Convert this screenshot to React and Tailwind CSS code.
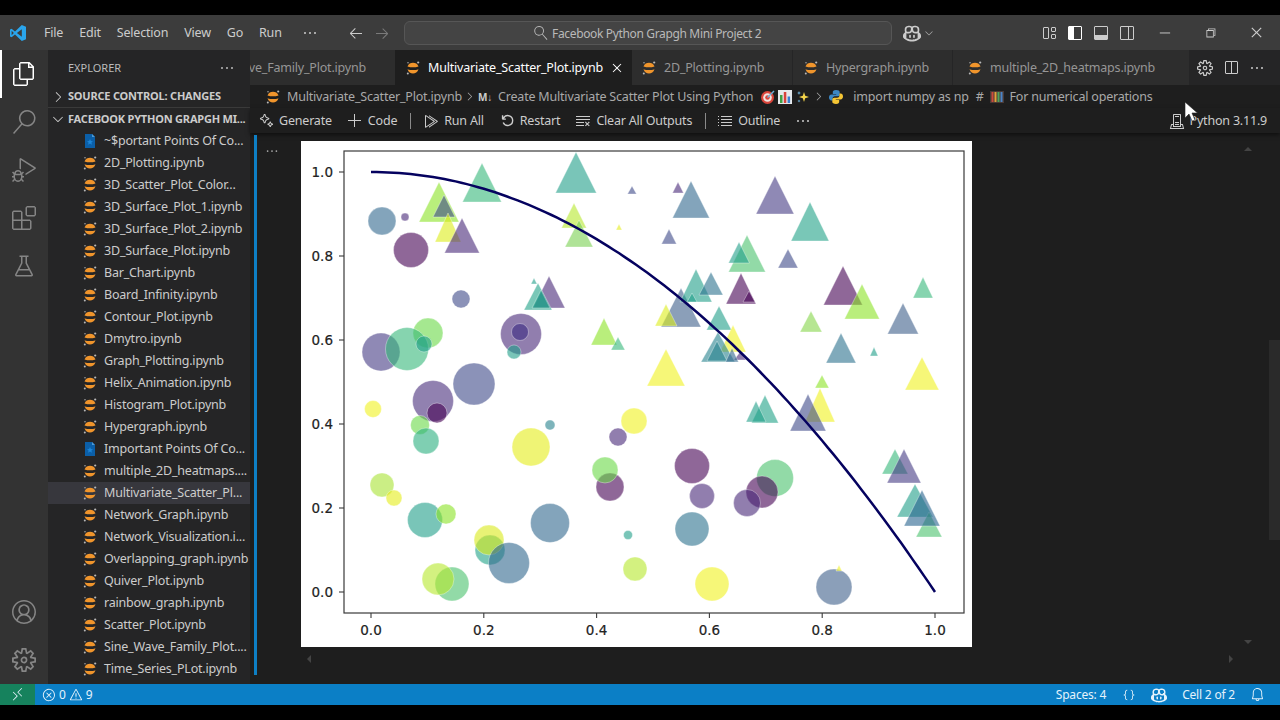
import React from 'react';
import {
  VscFiles, VscSearch, VscDebugAlt, VscExtensions, VscBeaker, VscAccount, VscSettingsGear,
  VscChevronRight, VscChevronDown, VscEllipsis, VscArrowLeft, VscArrowRight, VscClose,
  VscChromeMinimize, VscChromeRestore, VscChromeClose, VscSplitHorizontal, VscLayoutSidebarLeft,
  VscLayoutPanel, VscLayoutSidebarRightOff, VscLayout, VscCopilot, VscSparkle, VscAdd, VscRunAll,
  VscDebugRestart, VscClearAll, VscListUnordered, VscServerEnvironment, VscBell, VscRemote,
  VscError, VscWarning, VscJson,
} from 'react-icons/vsc';

const font = { fontFamily: '"Noto Sans", "Open Sans", sans-serif' };

const files = [
  ['~$portant Points Of Co...', 'word'],
  ['2D_Plotting.ipynb'],
  ['3D_Scatter_Plot_Color...'],
  ['3D_Surface_Plot_1.ipynb'],
  ['3D_Surface_Plot_2.ipynb'],
  ['3D_Surface_Plot.ipynb'],
  ['Bar_Chart.ipynb'],
  ['Board_Infinity.ipynb'],
  ['Contour_Plot.ipynb'],
  ['Dmytro.ipynb'],
  ['Graph_Plotting.ipynb'],
  ['Helix_Animation.ipynb'],
  ['Histogram_Plot.ipynb'],
  ['Hypergraph.ipynb'],
  ['Important Points Of Co...', 'word'],
  ['multiple_2D_heatmaps....'],
  ['Multivariate_Scatter_Pl...', 'nb', true],
  ['Network_Graph.ipynb'],
  ['Network_Visualization.i...'],
  ['Overlapping_graph.ipynb'],
  ['Quiver_Plot.ipynb'],
  ['rainbow_graph.ipynb'],
  ['Scatter_Plot.ipynb'],
  ['Sine_Wave_Family_Plot....'],
  ['Time_Series_PLot.ipynb'],
];

// [cx, cy, r, colour]
const circles = [
  [382, 221, 14, '#31688e'], [405, 217, 4, '#482878'], [411, 250, 17.5, '#440154'],
  [461, 299, 9, '#3e4989'], [521, 334, 20.5, '#482878'], [520, 332, 8.5, '#3b2a80'],
  [514, 352, 7, '#1f9e89'], [428, 333, 15, '#69d846'], [381, 352, 19, '#443a83'],
  [407, 349, 21.5, '#35b779'], [424, 344, 8, '#1f9e89'], [474, 384, 21, '#3e4989'],
  [433, 401, 20.5, '#472d7b'], [437, 413, 10, '#440154'], [373, 409, 8.5, '#f0f11e'],
  [420, 425, 9.5, '#69d846'], [426, 441, 13, '#29af7f'], [550, 425, 5, '#26828e'],
  [531, 447, 19, '#e5ec19'], [634, 421, 13, '#f0f11e'], [618, 437, 9, '#482878'],
  [610, 487, 14, '#440154'], [605, 470, 13, '#69d846'], [382, 485, 12, '#a8e234'],
  [394, 498, 8, '#e5ec19'], [425, 520, 17.5, '#1f9e89'], [446, 514, 10, '#8ae224'],
  [490, 550, 15, '#1fa187'], [489, 540, 15, '#d8ea19'], [509, 563, 20.5, '#31688e'],
  [550, 523, 19.5, '#31688e'], [452, 584, 17, '#4ac16d'], [438, 579, 16, '#b5e82b'],
  [628, 535, 4.5, '#1f9e89'], [635, 569, 12, '#b5e82b'], [692, 466, 17.5, '#440154'],
  [702, 496, 12.5, '#482878'], [692, 529, 17, '#2c728e'], [712, 584, 17, '#f0f11e'],
  [775, 478, 18.5, '#4ac16d'], [762, 492, 16, '#440154'], [747, 503, 13.5, '#482878'],
  [834, 587, 18, '#3e5f8a'],
];

// [cx, top, base, half width, colour]
const triangles = [
  [482, 163, 202, 19.5, '#35b779'], [576, 152, 193, 20.5, '#1f9e89'], [632, 186, 194, 4.5, '#3e4989'],
  [439, 182, 222, 20, '#8ae224'], [444, 195, 217, 11, '#3e4989'], [448, 213, 242, 13, '#dcec19'],
  [462, 218, 253, 17.5, '#482878'], [574, 203, 228, 12.5, '#b5e82b'], [579, 220, 247, 14, '#7ad151'],
  [619, 224, 230, 3, '#e5ec19'], [534, 278, 284, 3, '#1f9e89'], [549, 276, 308, 16, '#482878'],
  [538, 283, 310, 14, '#1fa187'], [541, 290, 308, 9, '#1f9e89'], [604, 318, 345, 13, '#8ae224'],
  [618, 337, 350, 7, '#35b779'], [666, 349, 386, 19, '#f0f11e'], [678, 182, 193, 5.5, '#482878'],
  [691, 181, 218, 18.5, '#31688e'], [775, 176, 214, 19, '#443a83'], [810, 202, 241, 19, '#1fa187'],
  [669, 229, 244, 7.5, '#3e4989'], [747, 235, 272, 18.5, '#4ac16d'], [739, 242, 263, 10.5, '#1f9e89'],
  [788, 249, 268, 10, '#3e4989'], [843, 266, 305, 19.5, '#440154'], [862, 284, 319, 17.5, '#8ae224'],
  [923, 277, 298, 10, '#35b779'], [903, 303, 334, 15.5, '#3e5f8a'], [811, 311, 332, 11, '#86d549'],
  [841, 333, 363, 15, '#2c728e'], [874, 347, 356, 4, '#1f9e89'], [922, 357, 390, 17, '#f0f11e'],
  [681, 288, 327, 20, '#3e5f8a'], [696, 269, 302, 16, '#1f9e89'], [711, 272, 295, 12, '#2c728e'],
  [741, 273, 304, 15, '#440154'], [749, 291, 302, 6, '#440154'], [666, 304, 326, 11, '#dcec19'],
  [692, 293, 302, 5, '#1f9e89'], [719, 306, 330, 12.5, '#1f9e89'], [733, 325, 352, 13, '#f0f11e'],
  [718, 332, 362, 17, '#26828e'], [717, 341, 361, 10, '#26828e'], [740, 352, 360, 6, '#482878'],
  [732, 348, 362, 6.5, '#31688e'], [822, 375, 388, 7, '#8ae224'], [765, 395, 423, 13.5, '#1fa187'],
  [756, 401, 422, 10, '#1f9e89'], [820, 388, 422, 15, '#f0f11e'], [808, 394, 431, 18, '#3e4989'],
  [895, 449, 474, 13, '#35b779'], [904, 449, 483, 17, '#443a83'], [915, 484, 517, 18, '#1f9e89'],
  [929, 512, 537, 13, '#4ac16d'], [922, 490, 526, 18, '#26628e'], [839, 565, 571, 3, '#f0f11e'],
];

const curve = Array.from({ length: 101 }, (_, i) => {
  const t = i / 100;
  return `${(371 + 564 * t).toFixed(1)},${(592 - 420 * (1 - t * t)).toFixed(1)}`;
}).join(' ');

function NotebookIcon({ size = 16 }) {
  return (
    <svg width={size} height={size} viewBox="0 0 16 16" className="shrink-0">
      <path d="M2.500 6.400C3.500 3.600 5.600 2.700 8 2.700s4.500.9 5.500 3.700C11.500 7 10 7.300 8 7.300S4.500 7 2.500 6.400z" fill="#f0952c" />
      <path d="M2.500 9.200C4.500 9.900 6 10.100 8 10.100s3.500-.2 5.500-.9C12.500 12.400 10.400 13.500 8 13.500S3.500 12.400 2.500 9.200z" fill="#f0952c" />
      <circle cx="13.200" cy="2.500" r="1.100" fill="#b8b8b8" />
      <circle cx="3" cy="2.800" r=".7" fill="#b8b8b8" />
      <circle cx="2.800" cy="13.600" r="1" fill="#b8b8b8" />
    </svg>
  );
}

function WordIcon() {
  return (
    <svg width="16" height="16" viewBox="0 0 16 16" className="shrink-0">
      <path d="M3 1h7l3 3v11H3z" fill="#0b5fa8" />
      <path d="M10 1l3 3h-3z" fill="#4d9ad6" />
      <path d="M8 6l.9 2 2.100.2-1.600 1.400.5 2.100L8 10.600 6.100 11.700l.5-2.100L5 8.200 7.100 8z" fill="#1c86d8" />
    </svg>
  );
}

function VsCodeLogo() {
  return (
    <svg width="18" height="18" viewBox="0 0 18 18">
      <path d="M12.800 1L6 7.400 2.600 4.800 1 5.600v6.800l1.600.8L6 10.600l6.800 6.400 4.200-1.700V2.700z" fill="#2aa5ec" />
      <path d="M12.800 5.300L7.900 9l4.900 3.700z" fill="#3c3c3c" />
      <path d="M2.600 6.700v4.600L4.900 9z" fill="#3c3c3c" />
    </svg>
  );
}

function PythonIcon() {
  return (
    <svg width="16" height="16" viewBox="0 0 16 16" className="shrink-0">
      <path d="M8 1C5.500 1 4.800 2 4.800 3.200V5h3.400v.6H3.400C2 5.600 1 6.800 1 8.500s1 2.900 2.300 2.900h1.300V9.600c0-1.300 1-2.300 2.300-2.300h3c1 0 1.800-.8 1.800-1.900V3.200C11.700 1.900 10.500 1 8 1z" fill="#3b87c4" />
      <path d="M8 15c2.500 0 3.200-1 3.200-2.200V11H7.800v-.6h4.800c1.400 0 2.400-1.200 2.400-2.900s-1-2.900-2.300-2.900h-1.300v1.800c0 1.300-1 2.300-2.300 2.300h-3c-1 0-1.800.8-1.800 1.900v2.200C4.300 14.100 5.500 15 8 15z" fill="#f4c534" />
    </svg>
  );
}

function EmojiTarget() {
  return (
    <svg width="16" height="16" viewBox="0 0 16 16" className="shrink-0">
      <circle cx="7.500" cy="8.500" r="6.500" fill="#d9453b" />
      <circle cx="7.500" cy="8.500" r="4.300" fill="#f1e4e0" />
      <circle cx="7.500" cy="8.500" r="2.300" fill="#d9453b" />
      <path d="M7.500 8.500L14 2" stroke="#6fb1d8" strokeWidth="1.400" />
    </svg>
  );
}

function EmojiChart() {
  return (
    <svg width="16" height="16" viewBox="0 0 16 16" className="shrink-0">
      <rect x="1" y="1" width="14" height="14" fill="#e6e9ec" />
      <rect x="3" y="6" width="2.500" height="8" fill="#3fa045" />
      <rect x="6.800" y="3" width="2.500" height="11" fill="#d8443c" />
      <rect x="10.600" y="7.500" width="2.500" height="6.500" fill="#3a7fd0" />
    </svg>
  );
}

function EmojiSparkle() {
  return (
    <svg width="16" height="16" viewBox="0 0 16 16" className="shrink-0">
      <path d="M9 3l1.200 3.800L14 8l-3.800 1.200L9 13 7.800 9.200 4 8l3.800-1.200z" fill="#f2d34a" />
      <path d="M4 2l.6 1.400L6 4l-1.400.6L4 6l-.6-1.400L2 4l1.400-.6zM4 10.500l.5 1 1 .5-1 .5-.5 1-.5-1-1-.5 1-.5z" fill="#6fb1d8" />
    </svg>
  );
}

function EmojiAbacus() {
  return (
    <svg width="14" height="14" viewBox="0 0 14 14" className="shrink-0">
      <rect x="0" y="1" width="14" height="12" fill="#4a3a36" />
      <rect x="1.500" y="2" width="2" height="10" fill="#c94a3c" />
      <rect x="4.500" y="2" width="2" height="10" fill="#e2a23c" />
      <rect x="7.500" y="2" width="2" height="10" fill="#4fa35a" />
      <rect x="10.500" y="2" width="2" height="10" fill="#4a86c8" />
    </svg>
  );
}

function Plot() {
  const xt = [0, 0.2, 0.4, 0.6, 0.8, 1];
  return (
    <svg viewBox="301 141 671 506" width="671" height="506" className="block shrink-0" style={{ fontFamily: '"DejaVu Sans", sans-serif', letterSpacing: 0 }}>
      <rect x="301" y="141" width="671" height="506" fill="#fff" />
      {circles.map(([cx, cy, r, c], i) => (
        <circle key={i} cx={cx} cy={cy} r={r} fill={c} fillOpacity=".6" stroke="#fff" strokeOpacity=".35" strokeWidth="1" />
      ))}
      {triangles.map(([cx, top, base, hw, c], i) => (
        <polygon key={i} points={`${cx},${top} ${cx - hw},${base} ${cx + hw},${base}`} fill={c} fillOpacity=".6" stroke="#fff" strokeOpacity=".35" strokeWidth="1" />
      ))}
      <polyline points={curve} fill="none" stroke="#05025f" strokeWidth="2.500" />
      <rect x="344" y="151" width="620" height="462" fill="none" stroke="#3a3a3a" strokeWidth="1.200" />
      {xt.map((v) => (
        <g key={v}>
          <line x1={371 + 564 * v} x2={371 + 564 * v} y1="613" y2="618" stroke="#3a3a3a" strokeWidth="1.100" />
          <text x={371 + 564 * v} y="635" textAnchor="middle" fontSize="13.500" fill="#222" stroke="#222" strokeWidth=".2">{v.toFixed(1)}</text>
          <line x1="339" x2="344" y1={592 - 420 * v} y2={592 - 420 * v} stroke="#3a3a3a" strokeWidth="1.100" />
          <text x="333" y={597 - 420 * v} textAnchor="end" fontSize="13.500" fill="#222" stroke="#222" strokeWidth=".2">{v.toFixed(1)}</text>
        </g>
      ))}
    </svg>
  );
}

function Tab({ label, className = '' }) {
  return (
    <div className={`flex items-center h-full bg-[#2d2d2d] text-[#969696] border-r border-[#252526] ${className}`}>
      <NotebookIcon />
      <span className="ml-[7px] whitespace-nowrap pt-[2px]">{label}</span>
    </div>
  );
}

function ToolItem({ icon, label, className = '' }) {
  return (
    <div className={`flex items-center gap-[5px] ${className}`}>
      {icon}
      <span className="pt-[2px]">{label}</span>
    </div>
  );
}

export default function App() {
  return (
    <div className="relative w-[1280px] h-[720px] flex flex-col bg-black overflow-hidden text-[12.5px] tracking-[-0.2px]" style={font}>
      <div className="h-[15px] shrink-0" />

      {/* title bar */}
      <div className="h-[35px] shrink-0 flex items-center bg-[#3c3c3c] text-[#cccccc]">
        <div className="w-[44px] pl-[9px] flex items-center"><VsCodeLogo /></div>
        <span className="pt-[2px]">File</span>
        <span className="pt-[2px] ml-[16px]">Edit</span>
        <span className="pt-[2px] ml-[16px]">Selection</span>
        <span className="pt-[2px] ml-[16px]">View</span>
        <span className="pt-[2px] ml-[16px]">Go</span>
        <span className="pt-[2px] ml-[16px]">Run</span>
        <VscEllipsis size={16} className="ml-[20px]" />
        <VscArrowLeft size={16} className="ml-[30px]" />
        <VscArrowRight size={16} className="ml-[10px] text-[#7a7a7a]" />
        <div className="ml-[14px] w-[488px] h-[24px] flex items-center justify-center rounded-md bg-[#444444] border border-[#565656] text-[#b9b9b9]">
          <VscSearch size={14} className="mr-[4px] -scale-x-100" />
          <span className="pt-[2px] text-[12px] tracking-[-0.35px]">Facebook Python Grapgh Mini Project 2</span>
        </div>
        <VscCopilot size={18} className="ml-[11px]" />
        <VscChevronDown size={12} className="ml-[2px] text-[#aaaaaa]" />
        <VscLayout size={16} className="ml-[106px]" />
        <VscLayoutSidebarLeft size={16} className="ml-[10px] text-white" />
        <VscLayoutPanel size={16} className="ml-[10px]" />
        <VscLayoutSidebarRightOff size={16} className="ml-[10px]" />
        <VscChromeMinimize size={15} className="ml-[22px]" />
        <VscChromeRestore size={13} className="ml-[32px]" />
        <VscChromeClose size={15} className="ml-[32px]" />
      </div>

      {/* workbench */}
      <div className="flex-1 min-h-0 flex">
        {/* activity bar */}
        <div className="w-12 shrink-0 bg-[#333333] flex flex-col items-center text-[#858585]">
          <div className="w-full h-[48px] flex items-center justify-center border-l-2 border-white text-white pr-[2px]">
            <VscFiles size={24} />
          </div>
          <div className="h-[48px] flex items-center"><VscSearch size={24} /></div>
          <div className="h-[48px] flex items-center"><VscDebugAlt size={24} /></div>
          <div className="h-[48px] flex items-center"><VscExtensions size={24} /></div>
          <div className="h-[48px] flex items-center"><VscBeaker size={24} /></div>
          <div className="flex-1" />
          <div className="h-[48px] flex items-center"><VscAccount size={24} /></div>
          <div className="h-[48px] flex items-center"><VscSettingsGear size={24} /></div>
        </div>

        {/* sidebar */}
        <div className="w-[202px] shrink-0 bg-[#252526] text-[#cccccc] flex flex-col overflow-hidden">
          <div className="h-[36px] shrink-0 flex items-center justify-between pl-[20px] pr-[15px] text-[11px] tracking-normal text-[#bbbbbb]">
            <span>EXPLORER</span>
            <VscEllipsis size={16} />
          </div>
          <div className="h-[22px] shrink-0 flex items-center pl-[2px] text-[11px] font-bold whitespace-nowrap border-b border-[#3a3a3a]">
            <VscChevronRight size={16} className="mr-[2px]" />
            <span>SOURCE CONTROL: CHANGES</span>
          </div>
          <div className="h-[22px] shrink-0 flex items-center pl-[2px] text-[11px] font-bold whitespace-nowrap">
            <VscChevronDown size={16} className="mr-[2px]" />
            <span>FACEBOOK PYTHON GRAPGH MI...</span>
          </div>
          {files.map(([name, kind, active]) => (
            <div key={name} className={`h-[22px] shrink-0 flex items-center pl-[34px] whitespace-nowrap ${active ? 'bg-[#37373d]' : ''}`}>
              {kind === 'word' ? <WordIcon /> : <NotebookIcon />}
              <span className="ml-[6px]">{name}</span>
            </div>
          ))}
        </div>

        {/* editor */}
        <div className="relative flex-1 min-w-0 bg-[#1e1e1e] flex flex-col text-[#cccccc]">
          <div className="h-[35px] shrink-0 flex items-center bg-[#252526]">
            <div className="w-[145px] h-full flex items-center overflow-hidden bg-[#2d2d2d] text-[#969696] whitespace-nowrap justify-end pr-[29px] pt-[2px]">
              ve_Family_Plot.ipynb
            </div>
            <div className="w-[237px] h-full flex items-center pl-[10px] bg-[#1e1e1e] text-white shrink-0">
              <NotebookIcon />
              <span className="ml-[7px] pt-[2px]">Multivariate_Scatter_Plot.ipynb</span>
              <VscClose size={16} className="ml-[6px]" />
            </div>
            <Tab label="2D_Plotting.ipynb" className="w-[161px] pl-[9px]" />
            <Tab label="Hypergraph.ipynb" className="w-[160px] pl-[10px]" />
            <Tab label="multiple_2D_heatmaps.ipynb" className="w-[237px] pl-[14px]" />
            <VscSettingsGear size={16} className="ml-[7px]" />
            <VscSplitHorizontal size={16} className="ml-[10px]" />
            <VscEllipsis size={16} className="ml-[10px]" />
          </div>

          <div className="h-[23px] shrink-0 flex items-center pl-[15px] text-[#a9a9a9] whitespace-nowrap">
            <NotebookIcon />
            <span className="ml-[6px] pt-[2px]">Multivariate_Scatter_Plot.ipynb</span>
            <VscChevronRight size={13} className="ml-[1px]" />
            <span className="ml-[2px] pt-[1px] text-[10px] font-bold text-[#cccccc]">M↓</span>
            <span className="ml-[6px] pt-[2px]">Create Multivariate Scatter Plot Using Python</span>
            <span className="ml-[7px]"><EmojiTarget /></span>
            <span className="ml-[1px]"><EmojiChart /></span>
            <span className="ml-[2px]"><EmojiSparkle /></span>
            <VscChevronRight size={13} className="ml-[1px]" />
            <span className="ml-[3px]"><PythonIcon /></span>
            <span className="ml-[9px] pt-[2px]">import numpy as np</span>
            <span className="ml-[7px] pt-[2px]">#</span>
            <span className="ml-[6px]"><EmojiAbacus /></span>
            <span className="ml-[6px] pt-[2px]">For numerical operations</span>
          </div>

          <div className="h-[25px] shrink-0 flex items-center pl-[9px] shadow-[0_2px_4px_rgba(0,0,0,0.5)] whitespace-nowrap">
            <ToolItem icon={<VscSparkle size={15} />} label="Generate" />
            <ToolItem icon={<VscAdd size={16} />} label="Code" className="ml-[15px]" />
            <div className="ml-[13px] w-px h-[16px] bg-[#8a8a8a]" />
            <ToolItem icon={<VscRunAll size={16} />} label="Run All" className="ml-[12px]" />
            <ToolItem icon={<VscDebugRestart size={15} />} label="Restart" className="ml-[16px]" />
            <ToolItem icon={<VscClearAll size={16} />} label="Clear All Outputs" className="ml-[15px]" />
            <div className="ml-[13px] w-px h-[16px] bg-[#8a8a8a]" />
            <ToolItem icon={<VscListUnordered size={16} />} label="Outline" className="ml-[11px]" />
            <VscEllipsis size={16} className="ml-[15px]" />
            <div className="flex-1" />
            <ToolItem icon={<VscServerEnvironment size={16} />} label="Python 3.11.9" className="mr-[13px]" />
          </div>

          {/* notebook area */}
          <div className="relative flex-1 min-h-0 flex pt-[8px]">
            <div className="ml-[4px] w-[3px] h-[540px] -mt-[6px] bg-[#0e7fc4] shrink-0" />
            <VscEllipsis size={14} className="ml-[8px] mt-[3px] text-[#aaaaaa] shrink-0" />
            <div className="ml-[22px]"><Plot /></div>

            {/* scrollbar and its arrows */}
            <div className="absolute right-0 top-[207px] w-[11px] h-[200px] bg-[#2a2a2a]" />
            <div className="absolute left-[994px] top-[14px] w-0 h-0 border-x-[4px] border-x-transparent border-b-[4px] border-b-[#444444]" />
            <div className="absolute left-[994px] top-[507px] w-0 h-0 border-x-[4px] border-x-transparent border-t-[4px] border-t-[#444444]" />
            <div className="absolute left-[57px] top-[522px] w-0 h-0 border-y-[4px] border-y-transparent border-r-[4px] border-r-[#444444]" />
            <div className="absolute left-[979px] top-[522px] w-0 h-0 border-y-[4px] border-y-transparent border-l-[4px] border-l-[#444444]" />
          </div>
        </div>
      </div>

      {/* status bar */}
      <div className="h-[21px] shrink-0 flex items-center bg-[#0b7fc6] text-[#e4f2fb] text-[12px]">
        <div className="w-[35px] h-full flex items-center justify-center bg-[#16825d]">
          <VscRemote size={15} />
        </div>
        <VscError size={14} className="ml-[7px]" />
        <span className="ml-[3px]">0</span>
        <VscWarning size={14} className="ml-[3px]" />
        <span className="ml-[3px]">9</span>
        <div className="flex-1" />
        <span>Spaces: 4</span>
        <VscJson size={14} className="ml-[16px]" />
        <VscCopilot size={16} className="ml-[15px]" />
        <span className="ml-[15px]">Cell 2 of 2</span>
        <VscBell size={15} className="ml-[15px] mr-[15px]" />
      </div>
      <div className="h-[15px] shrink-0" />

      {/* mouse pointer */}
      <svg width="14" height="22" viewBox="0 0 14 22" className="absolute left-[1184px] top-[101px]">
        <path d="M1 1v16l4-4 3 7 3-1-3-7h5.500z" fill="#fff" stroke="#222" strokeWidth=".6" />
      </svg>
    </div>
  );
}
